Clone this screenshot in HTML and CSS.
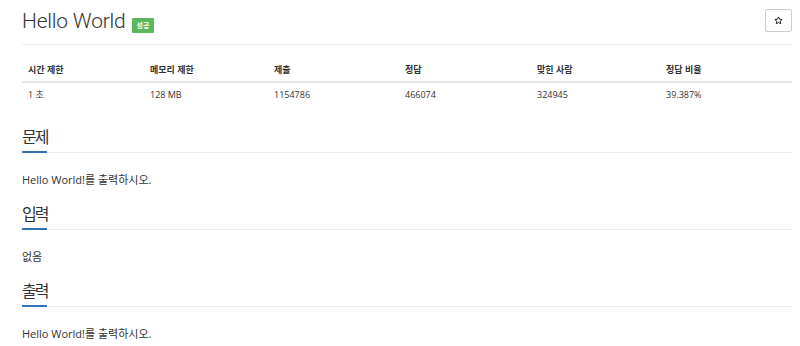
FILE: index.html
```html
<!DOCTYPE html>
<html lang="ko">
<head>
    <meta charset="UTF-8">
    <title>Hello World</title>
    <link rel="stylesheet" href="styles.css">
</head>
<body>
    <div class="container">
        <div class="page-header">
            <h1>
                <span class="problem-title">Hello World</span>
                <span class="label-success">성공</span>
            </h1>
            <button class="star-button" title="즐겨찾기">
                <svg width="9" height="9" viewBox="0 0 24 24"><path d="M12 2.5l2.9 6.2 6.7.7-5 4.6 1.4 6.7L12 17.3l-6 3.4 1.4-6.7-5-4.6 6.7-.7z" fill="none" stroke="#222" stroke-width="2.6" stroke-linejoin="round"/></svg>
            </button>
        </div>

        <table class="problem-info">
            <thead>
                <tr>
                    <th>시간 제한</th>
                    <th>메모리 제한</th>
                    <th>제출</th>
                    <th>정답</th>
                    <th>맞힌 사람</th>
                    <th>정답 비율</th>
                </tr>
            </thead>
            <tbody>
                <tr>
                    <td>1 초</td>
                    <td>128 MB</td>
                    <td>1154786</td>
                    <td>466074</td>
                    <td>324945</td>
                    <td>39.387%</td>
                </tr>
            </tbody>
        </table>

        <section class="problem-section">
            <h2><span>문제</span></h2>
            <p>Hello World!를 출력하시오.</p>
        </section>
        <section class="problem-section">
            <h2><span>입력</span></h2>
            <p>없음</p>
        </section>
        <section class="problem-section">
            <h2><span>출력</span></h2>
            <p>Hello World!를 출력하시오.</p>
        </section>
    </div>
</body>
</html>
```

FILE: styles.css
```css
* {
    box-sizing: border-box;
}

:root {
    --text-color: #333;
    --line-color: #eee;
    --accent-color: #3173b5;
    --success-color: #5cb85c;
}

body {
    margin: 0;
    font-family: 'Open Sans', 'Noto Sans CJK KR', sans-serif;
    font-size: 11px;
    color: var(--text-color);
    background-color: white;
}

.container {
    padding: 0 8px 0 22px;
}

/* Title */
.page-header {
    display: flex;
    justify-content: space-between;
    align-items: flex-start;
    padding: 9px 0 11px;
    border-bottom: 1px solid var(--line-color);
}

h1 {
    margin: 0;
    font-size: 20px;
    font-weight: 300;
    line-height: 24px;
    display: flex;
    align-items: flex-end;
    gap: 6px;
}

.problem-title {
    font-family: Roboto, 'Open Sans', sans-serif;
    font-size: 21px;
    letter-spacing: -0.2px;
}

.label-success {
    background-color: var(--success-color);
    color: #fff;
    font-size: 7px;
    font-weight: 700;
    line-height: 15px;
    padding: 0 5px;
    border-radius: 1px;
}

.star-button {
    width: 27px;
    height: 23px;
    border: 1px solid #ccc;
    border-radius: 2px;
    background: #fff;
    padding: 0;
    display: flex;
    align-items: center;
    justify-content: center;
    cursor: pointer;
}

/* Info table */
.problem-info {
    width: 100%;
    border-collapse: collapse;
    table-layout: fixed;
    margin-top: 13px;
    font-size: 9px;
}

.problem-info th,
.problem-info td {
    text-align: left;
    padding: 5px 6px;
    line-height: 13px;
}

.problem-info th {
    font-weight: 700;
    border-bottom: 2px solid #e4e4e4;
}

.problem-info th:nth-child(1) { width: 122px; }
.problem-info th:nth-child(2) { width: 124px; }
.problem-info th:nth-child(3) { width: 131px; }
.problem-info th:nth-child(4) { width: 132px; }
.problem-info th:nth-child(5) { width: 129px; }

/* Sections */
.problem-section h2 {
    margin: 15px 0 0;
    font-size: 16px;
    font-weight: 400;
    line-height: 22px;
    border-bottom: 1px solid var(--line-color);
}

.problem-section:first-of-type h2 {
    margin-top: 20px;
}

.problem-section h2 span {
    display: inline-block;
    letter-spacing: -2px;
    padding-bottom: 3px;
    margin-bottom: -1px;
    border-bottom: 2px solid var(--accent-color);
}

.problem-section p {
    margin: 19px 0 0;
    line-height: 16px;
}
```
